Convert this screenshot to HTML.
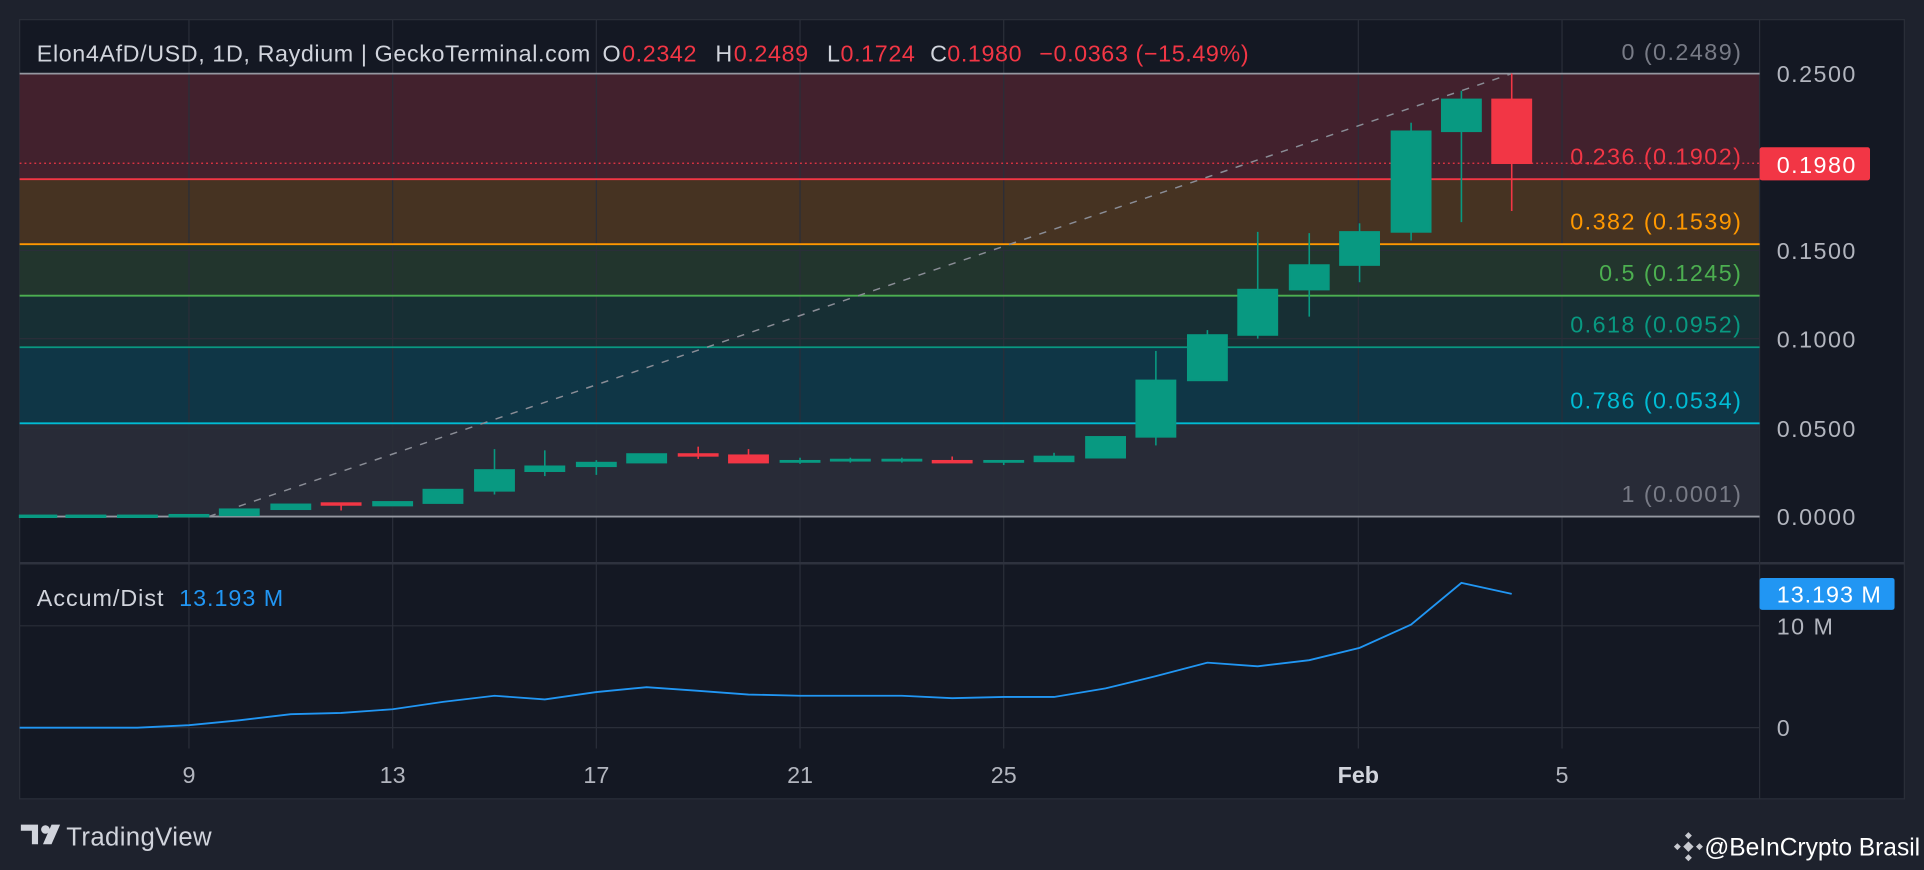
<!DOCTYPE html>
<html><head><meta charset="utf-8"><style>
html,body{margin:0;padding:0;background:#1e222d;width:1924px;height:870px;overflow:hidden}
svg{display:block}
text{font-family:"Liberation Sans",sans-serif}
</style></head><body>
<svg width="1924" height="870" viewBox="0 0 1568 709" preserveAspectRatio="none" xmlns="http://www.w3.org/2000/svg">
<rect width="1568" height="709" fill="#1e222d"/>
<rect x="16" y="16" width="1536" height="635" fill="#141823" stroke="#2a2e39" stroke-width="1"/>
<rect x="16" y="60" width="1418" height="86" fill="#42212d"/>
<rect x="16" y="146" width="1418" height="53" fill="#463322"/>
<rect x="16" y="199" width="1418" height="42" fill="#22352d"/>
<rect x="16" y="241" width="1418" height="42" fill="#172f34"/>
<rect x="16" y="283" width="1418" height="62" fill="#0f3646"/>
<rect x="16" y="345" width="1418" height="76" fill="#282b37"/>
<g stroke="#2a2e39" stroke-width="1">
<line x1="154" y1="16" x2="154" y2="610"/><line x1="320" y1="16" x2="320" y2="610"/>
<line x1="486" y1="16" x2="486" y2="610"/><line x1="652" y1="16" x2="652" y2="610"/>
<line x1="818" y1="16" x2="818" y2="610"/><line x1="1107" y1="16" x2="1107" y2="610"/>
<line x1="1273" y1="16" x2="1273" y2="610"/>
<line x1="16" y1="204" x2="1434" y2="204"/><line x1="16" y1="276" x2="1434" y2="276"/>
<line x1="16" y1="349" x2="1434" y2="349"/>
<line x1="16" y1="510" x2="1434" y2="510"/><line x1="16" y1="593" x2="1434" y2="593"/>
<line x1="16" y1="459" x2="1552" y2="459" stroke="#2e323e" stroke-width="2"/>
<line x1="1434" y1="16" x2="1434" y2="651"/>
</g>
<line x1="16" y1="60" x2="1434" y2="60" stroke="#9598a1" stroke-width="1.5"/>
<line x1="16" y1="146" x2="1434" y2="146" stroke="#f23645" stroke-width="1.5"/>
<line x1="16" y1="199" x2="1434" y2="199" stroke="#ff9800" stroke-width="1.5"/>
<line x1="16" y1="241" x2="1434" y2="241" stroke="#4caf50" stroke-width="1.5"/>
<line x1="16" y1="283" x2="1434" y2="283" stroke="#089981" stroke-width="1.5"/>
<line x1="16" y1="345" x2="1434" y2="345" stroke="#00bcd4" stroke-width="1.5"/>
<line x1="16" y1="421" x2="1434" y2="421" stroke="#9598a1" stroke-width="1.5"/>
<line x1="16" y1="133" x2="1434" y2="133" stroke="#f23645" stroke-width="1" stroke-dasharray="1.5 2.5"/>
<line x1="170" y1="421" x2="1232" y2="60" stroke="#8a8d96" stroke-width="1.2" stroke-dasharray="6 7"/>
<g fill="#089981" stroke="#089981" stroke-width="1.3">
<rect x="16" y="420" width="30" height="1.5"/>
<rect x="54" y="420" width="32" height="1.5"/>
<rect x="96" y="420" width="32" height="1.5"/>
<rect x="138" y="419.5" width="32" height="1.5"/>
<rect x="179" y="415" width="32" height="5"/>
<rect x="221" y="411" width="32" height="4"/>
<rect x="304" y="409" width="32" height="3"/>
<rect x="345" y="399" width="32" height="11"/>
<line x1="403" y1="366" x2="403" y2="403"/><rect x="387" y="383" width="32" height="17"/>
<line x1="444" y1="367" x2="444" y2="388"/><rect x="428" y="380" width="32" height="4"/>
<line x1="486" y1="375" x2="486" y2="387"/><rect x="470" y="377" width="32" height="3"/>
<rect x="511" y="370" width="32" height="7"/>
<line x1="652" y1="373" x2="652" y2="378"/><rect x="636" y="375.5" width="32" height="1"/>
<line x1="693" y1="373" x2="693" y2="377"/><rect x="677" y="374.5" width="32" height="1"/>
<line x1="735" y1="373" x2="735" y2="377"/><rect x="719" y="374.5" width="32" height="1"/>
<line x1="818" y1="375" x2="818" y2="379"/><rect x="802" y="375.5" width="32" height="1"/>
<line x1="859" y1="369" x2="859" y2="376"/><rect x="843" y="372" width="32" height="4"/>
<rect x="885" y="356" width="32" height="17"/>
<line x1="942" y1="286" x2="942" y2="363"/><rect x="926" y="310" width="32" height="46"/>
<line x1="984" y1="269" x2="984" y2="273"/><rect x="968" y="273" width="32" height="37"/>
<line x1="1025" y1="189" x2="1025" y2="276"/><rect x="1009" y="236" width="32" height="37"/>
<line x1="1067" y1="190" x2="1067" y2="258"/><rect x="1051" y="216" width="32" height="20"/>
<line x1="1108" y1="182" x2="1108" y2="230"/><rect x="1092" y="189" width="32" height="27"/>
<line x1="1150" y1="100" x2="1150" y2="196"/><rect x="1134" y="107" width="32" height="82"/>
<line x1="1191" y1="74" x2="1191" y2="181"/><rect x="1175" y="81" width="32" height="26"/>
</g>
<g fill="#f23645" stroke="#f23645" stroke-width="1.3">
<line x1="278" y1="410" x2="278" y2="416"/><rect x="262" y="410" width="32" height="1.5"/>
<line x1="569" y1="364" x2="569" y2="374"/><rect x="553" y="370" width="32" height="1.5"/>
<line x1="610" y1="366" x2="610" y2="371"/><rect x="594" y="371" width="32" height="6"/>
<line x1="776" y1="372" x2="776" y2="376"/><rect x="760" y="375.5" width="32" height="1.5"/>
<line x1="1232" y1="60" x2="1232" y2="172"/><rect x="1216" y="81" width="32" height="52"/>
</g>
<polyline fill="none" stroke="#2196f3" stroke-width="1.5" points="16,593 112,593 154,591 195,587 237,582 278,581 320,578 361,572 403,567 444,570 486,564 527,560 569,563 610,566 652,567 693,567 735,567 776,569 818,568 859,568 901,561 942,551 984,540 1025,543 1067,538 1108,528 1150,509 1191,475 1232,484"/>
<text y="50" font-size="19" fill="#d1d4dc" letter-spacing="0.5"><tspan x="30">Elon4AfD/USD, 1D, Raydium | GeckoTerminal.com</tspan><tspan x="491">O</tspan><tspan x="507" fill="#f23645">0.2342</tspan><tspan x="583">H</tspan><tspan x="598" fill="#f23645">0.2489</tspan><tspan x="674">L</tspan><tspan x="685" fill="#f23645">0.1724</tspan><tspan x="758">C</tspan><tspan x="772" fill="#f23645">0.1980</tspan><tspan x="847" fill="#f23645">−0.0363 (−15.49%)</tspan></text>
<g font-size="19" text-anchor="end" letter-spacing="1.2">
<text x="1420" y="49" fill="#787b86">0 (0.2489)</text>
<text x="1420" y="134" fill="#f23645">0.236 (0.1902)</text>
<text x="1420" y="187" fill="#ff9800">0.382 (0.1539)</text>
<text x="1420" y="229" fill="#4caf50">0.5 (0.1245)</text>
<text x="1420" y="271" fill="#089981">0.618 (0.0952)</text>
<text x="1420" y="333" fill="#00bcd4">0.786 (0.0534)</text>
<text x="1420" y="409" fill="#787b86">1 (0.0001)</text>
</g>
<g font-size="19" fill="#b2b5be" letter-spacing="1.2">
<text x="1448" y="67">0.2500</text>
<text x="1448" y="211">0.1500</text>
<text x="1448" y="283">0.1000</text>
<text x="1448" y="356">0.0500</text>
<text x="1448" y="428">0.0000</text>
<text x="1448" y="517">10 M</text>
<text x="1448" y="600">0</text>
</g>
<rect x="1434" y="120" width="90" height="27" rx="2" fill="#f23645"/>
<text x="1448" y="141" font-size="19" fill="#ffffff" letter-spacing="1.2">0.1980</text>
<rect x="1434" y="471" width="110" height="26" rx="2" fill="#2196f3"/>
<text x="1448" y="491" font-size="19" fill="#ffffff" letter-spacing="0.8">13.193 M</text>
<text x="30" y="494" font-size="19" fill="#d1d4dc" letter-spacing="0.8">Accum/Dist</text>
<text x="146" y="494" font-size="19" fill="#2196f3" letter-spacing="0.8">13.193 M</text>
<g font-size="19" fill="#b2b5be" text-anchor="middle">
<text x="154" y="638">9</text><text x="320" y="638">13</text><text x="486" y="638">17</text>
<text x="652" y="638">21</text><text x="818" y="638">25</text>
<text x="1107" y="638" font-weight="bold" fill="#d1d4dc">Feb</text><text x="1273" y="638">5</text>
</g>
<g fill="#d1d4dc">
<path d="M17,672 h14 v16 h-5 v-11 h-9 z"/>
<circle cx="37" cy="676" r="3.5"/>
<path d="M42,672 h7 l-7,16 h-7 z"/>
</g>
<text x="54" y="689" font-size="21" fill="#d1d4dc" letter-spacing="0.3">TradingView</text>
<g fill="#c8cad0" transform="translate(1376,690)">
<rect x="-3" y="-3" width="6" height="6" transform="rotate(45)"/>
<rect x="-2" y="-11" width="4" height="4" transform="rotate(45 0 -9)"/>
<rect x="-2" y="7" width="4" height="4" transform="rotate(45 0 9)"/>
<rect x="-11" y="-2" width="4" height="4" transform="rotate(45 -9 0)"/>
<rect x="7" y="-2" width="4" height="4" transform="rotate(45 9 0)"/>
</g>
<text x="1389" y="697" font-size="20" fill="#ffffff">@BeInCrypto Brasil</text>
</svg>
</body></html>
